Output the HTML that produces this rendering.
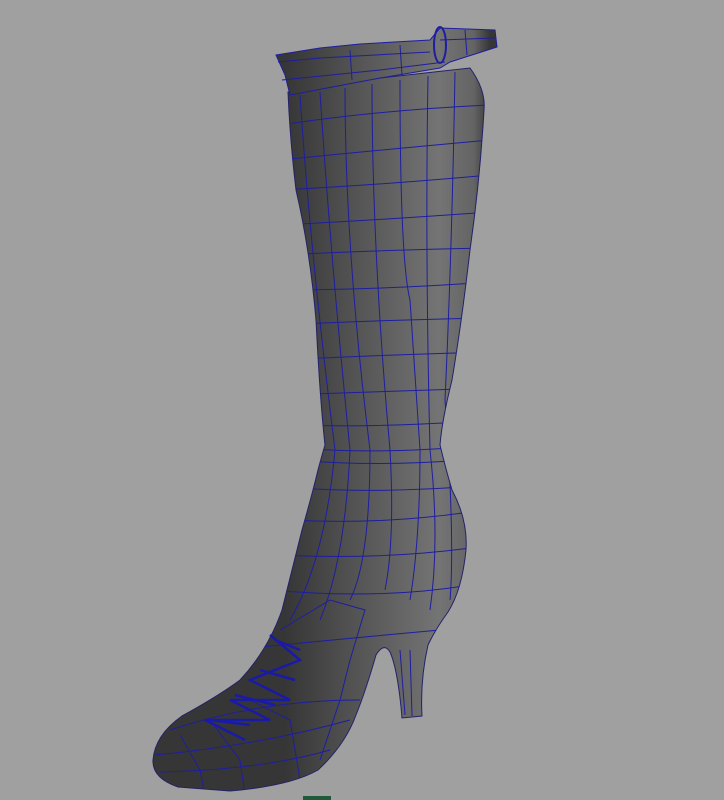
<!DOCTYPE html>
<html><head><style>
html,body{margin:0;padding:0;background:#a0a0a0;}
svg{display:block}
</style></head><body>
<svg width="724" height="800" viewBox="0 0 724 800" xmlns="http://www.w3.org/2000/svg">
<defs>
<linearGradient id="gs" gradientUnits="userSpaceOnUse" x1="285" y1="0" x2="490" y2="0">
<stop offset="0" stop-color="#363636"/>
<stop offset="0.3" stop-color="#505050"/>
<stop offset="0.75" stop-color="#747474"/>
<stop offset="0.92" stop-color="#646464"/>
<stop offset="1" stop-color="#363636"/>
</linearGradient>
<clipPath id="shaft"><path id="p" d="M288,92 L380,78 L470,68 Q486,90 484,110 Q480,180 470,250 Q462,320 452,380 Q442,420 440,445 Q446,470 452,490 Q468,520 466,550 Q462,590 448,612 Q435,630 428,645 Q420,680 422,716 L402,718 Q398,670 390,652 Q384,642 376,655 Q366,690 356,715 Q345,745 318,770 Q290,786 230,791 L178,787 Q152,778 153,760 Q155,735 182,716 Q220,695 240,680 Q268,650 282,610 Q292,570 302,530 Q312,495 318,470 Q322,455 325,445 Q320,400 316,320 Q310,250 296,190 Q290,140 288,92 Z"/></clipPath>
</defs>
<use href="#p" fill="url(#gs)" stroke="#22226a" stroke-width="1"/>
<g clip-path="url(#shaft)" fill="none" stroke="#1e1ea0" stroke-width="1">
<path d="M280,125 Q380,110 490,105"/>
<path d="M280,160 Q380,150 490,140"/>
<path d="M280,190 Q380,185 490,175"/>
<path d="M280,225 Q380,220 490,212"/>
<path d="M280,255 Q380,250 490,248"/>
<path d="M280,290 Q380,290 490,282"/>
<path d="M280,325 Q380,320 490,318"/>
<path d="M280,360 Q380,355 490,352"/>
<path d="M280,395 Q380,392 490,388"/>
<path d="M300,425 Q380,428 490,420"/>
<path d="M300,448 Q380,455 490,445"/>
<path d="M300,460 Q380,468 490,458"/>
<path d="M300,488 Q380,494 490,485"/>
<path d="M290,520 Q380,525 470,512"/>
<path d="M280,555 Q380,560 470,548"/>
<path d="M270,590 Q380,600 470,585"/>
<path d="M230,650 Q330,640 440,630"/>
<path d="M170,730 Q260,700 360,700"/>
<path d="M155,755 Q260,745 350,720"/>
<path d="M160,772 Q260,770 330,750"/>
<path d="M300,95 Q310,250 335,450 Q325,560 290,620"/>
<path d="M320,92 Q330,250 350,450 Q345,560 320,620"/>
<path d="M345,88 Q345,250 370,450 Q370,560 350,600"/>
<path d="M372,84 Q372,250 390,450 Q395,540 385,590"/>
<path d="M400,80 Q400,260 410,300 L420,450 Q420,540 410,600"/>
<path d="M428,76 Q425,250 430,450 Q440,540 430,610"/>
<path d="M455,72 Q452,250 445,400 Q455,540 450,600"/>
<path d="M280,630 L330,600 L365,610 L350,660 L340,700 L320,760"/>
<path d="M250,700 L290,720 L300,780"/>
<path d="M210,720 L240,760 L245,795"/>
<path d="M180,735 L200,770 L205,795"/>
<path d="M400,650 L405,715"/><path d="M410,650 L412,716"/>
</g>
<g stroke="#1a1aa8" stroke-width="2.5" fill="none">
<path d="M270,635 L300,660 L250,680 L290,700 L230,700 L270,720 L205,720 L245,740"/>
<path d="M275,640 L300,650 M260,670 L295,680 M235,695 L275,705 M210,720 L250,725"/>
</g>
<path d="M276,55 L320,48 L360,44 L430,40 L440,28 L495,30 L497,47 L450,62 L440,68 L380,78 L290,95 L285,75 Z" fill="url(#gs)" stroke="#1e1ea0" stroke-width="1"/>
<path d="M278,62 L320,58 L430,52 M282,80 L380,70 L445,62 M440,40 L495,38 M350,50 L352,80 M400,45 L402,75 M465,30 L467,55" stroke="#1e1ea0" fill="none"/>
<ellipse cx="440" cy="45" rx="6" ry="18" fill="none" stroke="#1e1ea0" stroke-width="2"/>
<rect x="303" y="796" width="28" height="4" fill="#1f5a3a"/>
</svg>
</body></html>
